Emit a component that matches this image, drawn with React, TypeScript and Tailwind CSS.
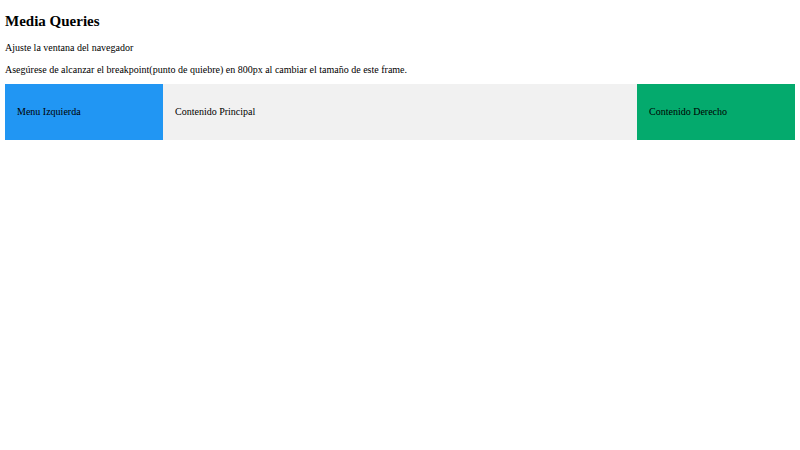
export default function App() {
  return (
    <div className="bg-white min-h-[450px] px-[5px] pt-[12.5px] text-black" style={{ fontFamily: '"Liberation Serif", "Times New Roman", serif' }}>
      <h2 className="text-[15px] font-bold leading-[17.25px] mb-[12.5px]">Media Queries</h2>
      <p className="text-[10px] leading-[11.5px] mb-[10px]">Ajuste la ventana del navegador</p>
      <p className="text-[10px] leading-[11.5px] mb-[9px]">
        Asegúrese de alcanzar el breakpoint(punto de quiebre) en 800px al cambiar el tamaño de este frame.
      </p>
      <div className="flex w-[790px]">
        <div className="w-[20%] bg-[#2196F3] p-[12px]">
          <p className="text-[10px] leading-[11.5px] my-[10px]">Menu Izquierda</p>
        </div>
        <div className="w-[60%] bg-[#f1f1f1] p-[12px]">
          <p className="text-[10px] leading-[11.5px] my-[10px]">Contenido Principal</p>
        </div>
        <div className="w-[20%] bg-[#04AA6D] p-[12px]">
          <p className="text-[10px] leading-[11.5px] my-[10px]">Contenido Derecho</p>
        </div>
      </div>
    </div>
  );
}
